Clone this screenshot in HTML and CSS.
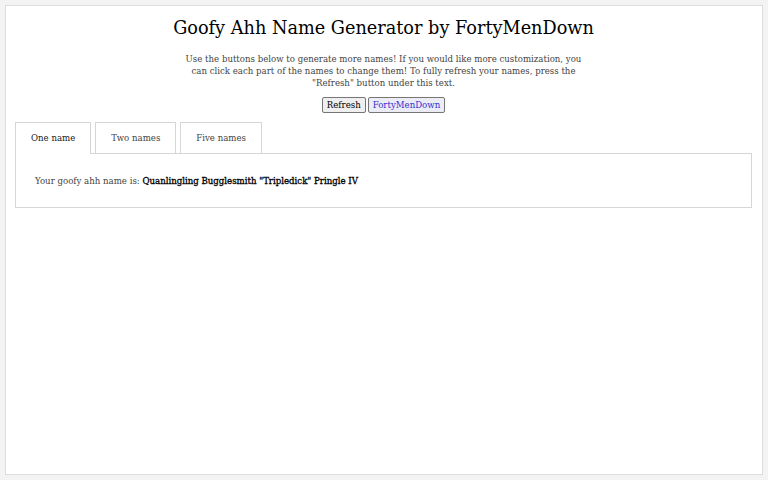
FILE: index.html
```html
<!DOCTYPE html>
<html>
<head>
  <title>Goofy Ahh Name Generator</title>
  <link rel="stylesheet" href="styles.css">
</head>
<body>
  <div class="page">
    <h1>Goofy Ahh Name Generator by FortyMenDown</h1>
    <p class="intro">Use the buttons below to generate more names! If you would like more customization, you can click each part of the names to change them! To fully refresh your names, press the "Refresh" button under this text.</p>

    <div class="actions">
      <button class="btn">Refresh</button>
      <button class="btn btn-link">FortyMenDown</button>
    </div>

    <div class="tabs">
      <div class="tab active">One name</div>
      <div class="tab">Two names</div>
      <div class="tab">Five names</div>
    </div>
    <div class="tab-panel">
      Your goofy ahh name is: <span class="name">Quanlingling Bugglesmith "Tripledick" Pringle IV</span>
    </div>
  </div>
</body>
</html>
```

FILE: styles.css
```css
html, body {
  height: 100%;
}

body {
  margin: 0;
  padding: 5px;
  box-sizing: border-box;
  background-color: #f3f3f3;
  font-family: "DejaVu Serif", serif;
  color: #333;
}

.page {
  height: 100%;
  box-sizing: border-box;
  background-color: white;
  border: 1px solid #dcdcdc;
  padding: 0 10px 0 9px;
}

h1 {
  margin: 12px 0 0;
  text-align: center;
  font-size: 17.7px;
  font-weight: normal;
  color: black;
}

.intro {
  width: 400px;
  margin: 15px auto 0;
  text-align: center;
  font-size: 8.6px;
  line-height: 12px;
  color: #444;
}

.actions {
  display: flex;
  justify-content: center;
  gap: 2px;
  margin-top: 8px;
}

.btn {
  font-family: "DejaVu Serif", serif;
  font-size: 8.6px;
  padding: 2px 4px;
  border: 1px solid #767676;
  border-radius: 2px;
  background-color: #efefef;
  color: black;
}

.btn-link {
  color: #3030d0;
  background-color: #ececf6;
}

.tabs {
  display: flex;
  gap: 4px;
  margin-top: 9px;
}

.tab {
  padding: 10px 15px 0;
  height: 21px;
  border: 1px solid #d6d6d6;
  border-bottom: none;
  font-size: 8.6px;
  color: #444;
  background-color: white;
}

.tab:not(.active) {
  height: 20px;
  border-bottom: 1px solid #d6d6d6;
}

.tab.active {
  position: relative;
  z-index: 1;
  color: #222;
}

.tab-panel {
  margin-top: -1px;
  border: 1px solid #d6d6d6;
  padding: 21px 19px 20px;
  font-size: 8.6px;
  line-height: 12px;
  color: #444;
}

.name {
  color: black;
  -webkit-text-stroke: 0.3px black;
}
```
